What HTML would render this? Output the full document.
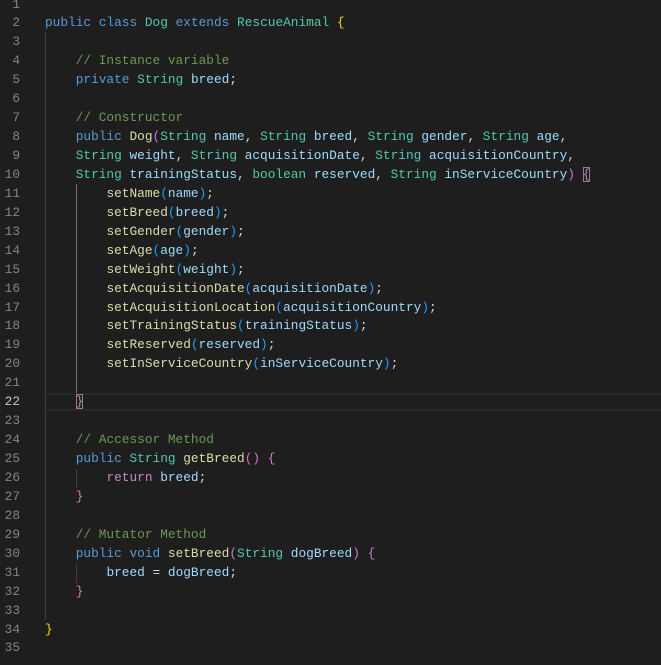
<!DOCTYPE html>
<html><head><meta charset="utf-8"><style>
html,body{margin:0;padding:0;background:#1e1e1e;width:661px;height:665px;overflow:hidden}
#ed{position:relative;width:661px;height:665px;font-family:"Liberation Mono",monospace;font-size:12.8px;}
.l{position:absolute;left:0;height:19px;line-height:19px;white-space:pre;width:661px}
.n{position:absolute;left:0;width:20px;text-align:right;color:#858585}
.c{position:absolute;left:45px;color:#d4d4d4}
.k{color:#569cd6}.t{color:#4ec9b0}.v{color:#9cdcfe}.f{color:#dcdcaa}.cm{color:#6a9955}.r{color:#c586c0}
.b1{color:#ffd700}.b2{color:#da70d6}.b3{color:#179fff}
.g{position:absolute;width:1px;background:#404040}
.box{outline:1px solid #888;outline-offset:-1px}
</style></head><body><div id="ed">
<div style="position:absolute;left:45px;right:0;top:393px;height:18px;border-top:2px solid #282828;border-bottom:2px solid #282828;box-sizing:border-box"></div>
<div class="g" style="left:45px;top:32px;height:588px"></div>
<div class="g" style="left:76px;top:184px;height:209px;background:#707070"></div>
<div class="g" style="left:76px;top:469px;height:19px"></div>
<div class="g" style="left:76px;top:564px;height:19px"></div>
<script>
const L=[
'',
'<span class="k">public</span> <span class="k">class</span> <span class="t">Dog</span> <span class="k">extends</span> <span class="t">RescueAnimal</span> <span class="b1">{</span>',
'',
'    <span class="cm">// Instance variable</span>',
'    <span class="k">private</span> <span class="t">String</span> <span class="v">breed</span>;',
'',
'    <span class="cm">// Constructor</span>',
'    <span class="k">public</span> <span class="f">Dog</span><span class="b2">(</span><span class="t">String</span> <span class="v">name</span>, <span class="t">String</span> <span class="v">breed</span>, <span class="t">String</span> <span class="v">gender</span>, <span class="t">String</span> <span class="v">age</span>,',
'    <span class="t">String</span> <span class="v">weight</span>, <span class="t">String</span> <span class="v">acquisitionDate</span>, <span class="t">String</span> <span class="v">acquisitionCountry</span>,',
'    <span class="t">String</span> <span class="v">trainingStatus</span>, <span class="t">boolean</span> <span class="v">reserved</span>, <span class="t">String</span> <span class="v">inServiceCountry</span><span class="b2">)</span> <span class="b2 box">{</span>',
'        <span class="f">setName</span><span class="b3">(</span><span class="v">name</span><span class="b3">)</span>;',
'        <span class="f">setBreed</span><span class="b3">(</span><span class="v">breed</span><span class="b3">)</span>;',
'        <span class="f">setGender</span><span class="b3">(</span><span class="v">gender</span><span class="b3">)</span>;',
'        <span class="f">setAge</span><span class="b3">(</span><span class="v">age</span><span class="b3">)</span>;',
'        <span class="f">setWeight</span><span class="b3">(</span><span class="v">weight</span><span class="b3">)</span>;',
'        <span class="f">setAcquisitionDate</span><span class="b3">(</span><span class="v">acquisitionDate</span><span class="b3">)</span>;',
'        <span class="f">setAcquisitionLocation</span><span class="b3">(</span><span class="v">acquisitionCountry</span><span class="b3">)</span>;',
'        <span class="f">setTrainingStatus</span><span class="b3">(</span><span class="v">trainingStatus</span><span class="b3">)</span>;',
'        <span class="f">setReserved</span><span class="b3">(</span><span class="v">reserved</span><span class="b3">)</span>;',
'        <span class="f">setInServiceCountry</span><span class="b3">(</span><span class="v">inServiceCountry</span><span class="b3">)</span>;',
'',
'    <span class="b2 box">}</span>',
'',
'    <span class="cm">// Accessor Method</span>',
'    <span class="k">public</span> <span class="t">String</span> <span class="f">getBreed</span><span class="b2">()</span> <span class="b2">{</span>',
'        <span class="r">return</span> <span class="v">breed</span>;',
'    <span class="b2">}</span>',
'',
'    <span class="cm">// Mutator Method</span>',
'    <span class="k">public</span> <span class="k">void</span> <span class="f">setBreed</span><span class="b2">(</span><span class="t">String</span> <span class="v">dogBreed</span><span class="b2">)</span> <span class="b2">{</span>',
'        <span class="v">breed</span> = <span class="v">dogBreed</span>;',
'    <span class="b2">}</span>',
'',
'<span class="b1">}</span>',
''];
let h='';
L.forEach((s,i)=>{const top=(4+i*18.94-9.5).toFixed(2);
h+=`<div class="l" style="top:${top}px"><span class="n" style="${i==21?'color:#c6c6c6':''}">${i+1}</span><span class="c">${s}</span></div>`;});
document.write(h);
</script>
</div></body></html>
